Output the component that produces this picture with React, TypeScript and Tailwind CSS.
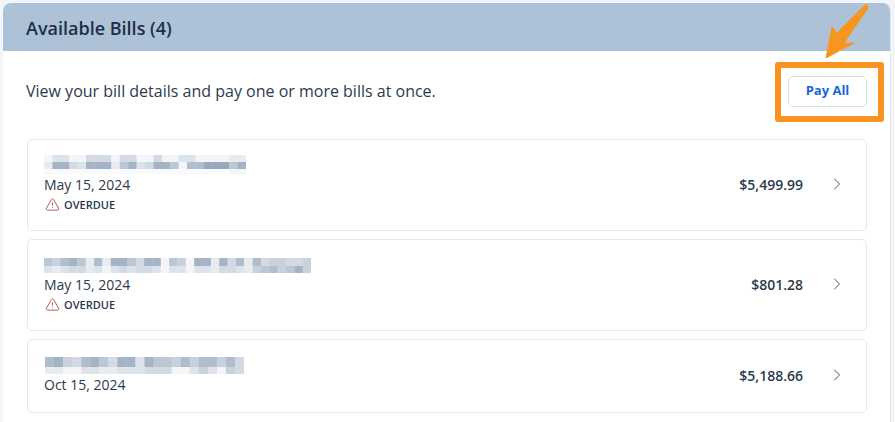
import { ChevronRight, TriangleAlert } from 'lucide-react'

interface MosaicRow {
  y: number
  h: number
  cells: string
}

interface Bill {
  date: string
  amount: string
  overdue: boolean
  x: number
  width: number
  rows: MosaicRow[]
}

// digits are shades for the blurred mosaic: 0 lightest, 9 darkest
const shades: Record<string, string> = {
  w: '#f9fafc',
  '0': '#f3f5f8',
  '1': '#e8ecf1',
  '2': '#dde3ea',
  '3': '#d3dae3',
  '4': '#c8d1dc',
  '5': '#bcc7d4',
  '6': '#b0bdcc',
  '7': '#a4b3c5',
  '8': '#98a9bd',
  '9': '#8ea1b7',
}

const bills: Bill[] = [
  {
    date: 'May 15, 2024',
    amount: '$5,499.99',
    overdue: true,
    x: 0,
    width: 202,
    rows: [
      { y: 0, h: 7, cells: '022003330330030022000011' },
      { y: 7, h: 7, cells: '177327771572377506688857' },
      { y: 14, h: 5, cells: 'wwwwwwwwwwwwwwwwwwwwww00' },
    ],
  },
  {
    date: 'May 15, 2024',
    amount: '$801.28',
    overdue: true,
    x: 0,
    width: 267,
    rows: [
      { y: 3, h: 8, cells: '54675161775377054077173616344334' },
      { y: 11, h: 7, cells: '21233120232332022022133214564574' },
    ],
  },
  {
    date: 'Oct 15, 2024',
    amount: '$5,188.66',
    overdue: false,
    x: 1,
    width: 199,
    rows: [
      { y: 2, h: 10, cells: '6743675377275546466463' },
      { y: 12, h: 7, cells: '1100221122233300242043' },
    ],
  },
]

function Mosaic({ bill }: { bill: Bill }) {
  const total = bill.x + bill.width
  return (
    <svg width={total} height={19} viewBox={`0 0 ${total} 19`} className="block blur-[0.5px]">
      {bill.rows.map((row, r) =>
        row.cells.split('').map((c, i) => {
          const w = bill.width / row.cells.length
          return <rect key={`${r}-${i}`} x={bill.x + i * w} y={row.y} width={w + 0.3} height={row.h} fill={shades[c]} />
        }),
      )}
    </svg>
  )
}

function BillRow({ bill }: { bill: Bill }) {
  return (
    <div className="flex items-center justify-between rounded-[5px] border border-[#e3e7ee] bg-white pt-[15px] pb-[17px] pl-[16px] pr-[19px]">
      <div>
        <Mosaic bill={bill} />
        <p className="mt-[1px] text-[14px] leading-[20px] text-[#2d3a4d]">{bill.date}</p>
        {bill.overdue && (
          <div className="mt-[1px] flex h-[17px] items-center gap-[4px] pl-[1px]">
            <TriangleAlert size={15} strokeWidth={1.5} className="text-[#b5524f]" />
            <span className="text-[11px] font-semibold leading-[17px] text-[#2d3a4d]">OVERDUE</span>
          </div>
        )}
      </div>
      <div className="flex items-center gap-[24px]">
        <span className="text-[14px] font-semibold text-[#2d3a4d]">{bill.amount}</span>
        <ChevronRight size={20} strokeWidth={1.25} className="text-[#6b7788]" />
      </div>
    </div>
  )
}

export default function App() {
  return (
    <div className="relative h-[422px] w-[895px] overflow-hidden bg-[#f3f5f9] px-[3px] pt-[3px] font-['Open_Sans',sans-serif]">
      <div className="h-[500px] w-[888px] overflow-hidden rounded-t-[8px] border-r border-[#e3e7ee] bg-white">
        <div className="flex h-[48px] items-center bg-[#adc2d7] px-[23px] pt-[2px]">
          <h2 className="text-[18px] font-semibold text-[#1f2f45]">Available Bills (4)</h2>
        </div>

        <div className="mb-[8px] flex h-[80px] items-center justify-between pl-[23px] pr-[23px]">
          <p className="text-[16px] text-[#2d3a4d]">View your bill details and pay one or more bills at once.</p>
          <button className="h-[31px] w-[79px] rounded-[5px] border border-[#d5e0ef] bg-white text-[13px] font-bold text-[#1668d6]">
            Pay All
          </button>
        </div>

        <div className="flex flex-col gap-[8px] pl-[24px] pr-[23px]">
          {bills.map((bill, i) => (
            <BillRow key={i} bill={bill} />
          ))}
        </div>
      </div>

      {/* annotation */}
      <div className="absolute left-[775px] top-[62px] h-[60px] w-[109px] rounded-[3px] border-[6px] border-[#f7931e]" />
      <svg className="absolute left-[820px] top-0" width="50" height="62" viewBox="0 0 50 62">
        <path
          d="M6 58 L12 27 L17 33 L46 4 L48 8 L24 43 L34 43 Z"
          fill="#f7961f"
          stroke="#f7961f"
          strokeWidth="1"
          strokeLinejoin="round"
        />
      </svg>
    </div>
  )
}
